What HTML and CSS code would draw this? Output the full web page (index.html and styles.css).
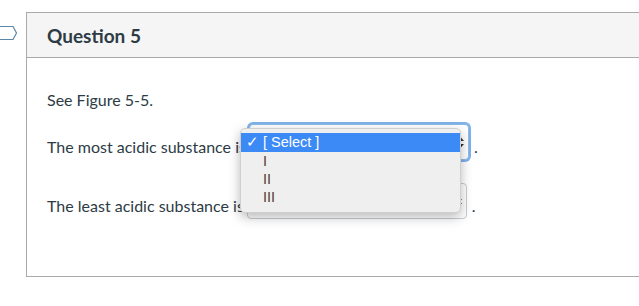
FILE: index.html
```html
<!DOCTYPE html>
<html lang="en">
<head>
    <meta charset="UTF-8">
    <title>Question 5</title>
    <link rel="stylesheet" href="styles.css">
</head>
<body>

<div class="flag-col">
    <svg class="flag" width="18" height="17" viewBox="0 0 18 17">
        <path d="M-2 1.5 H13 L16.5 8 L13 14.5 H-2 Z" fill="#fff" stroke="#5a86aa" stroke-width="1.2"/>
    </svg>
</div>

<div class="question">
    <div class="question-header">
        <h2 class="question-title">Question 5</h2>
    </div>

    <div class="question-body">
        <p class="intro">See Figure 5-5.</p>

        <div class="answer-row">
            <span class="answer-text">The most acidic substance is</span>
            <div class="select-box focused">
                <span class="select-arrows">
                    <svg width="7" height="11" viewBox="0 0 7 11">
                        <path d="M3.5 0 L7 4 H0 Z M3.5 11 L7 7 H0 Z" fill="#333"/>
                    </svg>
                </span>
                <!-- open popup of the first select -->
                <div class="select-menu">
                    <div class="menu-item selected"><span class="check">&#10003;</span>[ Select ]</div>
                    <div class="menu-item">I</div>
                    <div class="menu-item">II</div>
                    <div class="menu-item">III</div>
                </div>
            </div>
            <span class="dot">.</span>
        </div>

        <div class="answer-row">
            <span class="answer-text">The least acidic substance is</span>
            <div class="select-box">
                <span class="select-arrows">
                    <svg width="7" height="11" viewBox="0 0 7 11">
                        <path d="M3.5 0 L7 4 H0 Z M3.5 11 L7 7 H0 Z" fill="#333"/>
                    </svg>
                </span>
            </div>
            <span class="dot">.</span>
        </div>
    </div>
</div>

</body>
</html>
```

FILE: styles.css
```css
body {
    margin: 0;
    display: flex;
    font-family: Lato, "Open Sans", sans-serif;
    color: #2d3b45;
    background-color: #fff;
    overflow: hidden;
}

.flag-col {
    width: 26px;
    flex-shrink: 0;
}

.flag {
    display: block;
    margin-top: 25px;
}

.question {
    margin-top: 12px;
    width: 640px;
    flex-shrink: 0;
    border: 1px solid #aaaaaa;
    border-right: none;
}

.question-header {
    height: 44px;
    background-color: #f5f5f5;
    border-bottom: 1px solid #aaaaaa;
    display: flex;
    align-items: center;
    padding-left: 20px;
}

.question-title {
    margin: 0;
    font-size: 19px;
    font-weight: bold;
    color: #2d3b45;
}

.question-body {
    padding: 30px 20px 57px 20px;
    font-size: 16px;
}

.intro {
    margin: 0 0 12px 0;
    line-height: 24px;
}

.answer-row {
    display: flex;
    align-items: center;
    height: 36px;
    margin-bottom: 23px;
}

.answer-row:last-child {
    margin-bottom: 0;
}

.answer-text {
    margin-top: 8px;
}

.select-box {
    position: relative;
    width: 218px;
    height: 34px;
    margin-left: 3px;
    border: 1px solid #c7cdd1;
    border-radius: 4px;
    background-color: #fff;
    flex-shrink: 0;
}

.select-box.focused {
    border-color: #8fbbe8;
    box-shadow: 0 0 0 2px #7fb2ea;
}

.select-arrows {
    position: absolute;
    right: 4px;
    top: 12px;
}

.select-arrows svg {
    display: block;
}

.dot {
    margin-left: 5px;
    margin-top: 8px;
}

.select-menu {
    position: absolute;
    left: -10px;
    top: 3px;
    width: 219px;
    padding: 4px 0 6px 0;
    background-color: #efefef;
    border: 1px solid #cfcfcf;
    border-radius: 5px;
    box-shadow: 0 4px 12px rgba(0, 0, 0, 0.28);
    font-family: "Liberation Sans", Arial, sans-serif;
    font-size: 14.5px;
    z-index: 10;
}

.menu-item {
    height: 18px;
    line-height: 18px;
    padding-left: 22px;
    color: #5a3a32;
    position: relative;
}

.menu-item.selected {
    height: 19px;
    line-height: 19px;
    background-color: #3b8af6;
    color: #fff;
}

.check {
    position: absolute;
    left: 5px;
    top: 0;
}
```
